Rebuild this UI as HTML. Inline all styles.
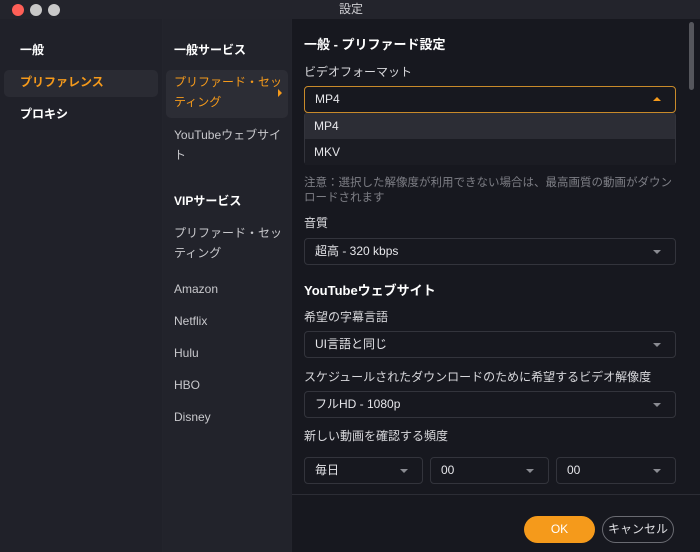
<!DOCTYPE html>
<html><head><meta charset="utf-8"><style>
*{margin:0;padding:0;box-sizing:border-box}
body{width:700px;height:552px;overflow:hidden;background:#23242c;font-family:"Liberation Sans","Noto Sans CJK JP",sans-serif;color:#e6e6ea;position:relative}
.a{position:absolute;white-space:nowrap;line-height:1.2}
.dot{position:absolute;top:4px;width:12px;height:12px;border-radius:50%}
.c1{left:0;top:19px;width:162px;height:533px;background:#202129}
.c2{left:163px;top:19px;width:128px;height:533px;background:#22232b}
.main{left:292px;top:19px;width:408px;height:533px;background:#17181f}
.sel{position:absolute;border:1px solid #33343c;border-radius:4px;background:#17181f;height:27px}
.sel span{position:absolute;left:10px;top:0;line-height:25px;font-size:12px;color:#e6e6ea}
.car{position:absolute;right:14px;top:11px;width:0;height:0;border-left:4px solid transparent;border-right:4px solid transparent;border-top:4px solid #8a8b92}
.lbl{font-size:12px;color:#d8d8dc}
.h{font-size:13px;font-weight:bold;color:#fff}
.s2{font-size:12px;color:#c8c8cc}
</style></head><body>
<div class="dot" style="left:12px;background:#fe5f57"></div>
<div class="dot" style="left:30px;background:#c8c8c8"></div>
<div class="dot" style="left:48px;background:#c8c8c8"></div>
<div class="a" style="left:339px;top:2px;font-size:12px;color:#d0d0d4">設定</div>
<div class="a c1"></div><div class="a c2"></div><div class="a main"></div>
<div class="a h" style="left:20px;top:43px;font-size:12px">一般</div>
<div class="a" style="left:4px;top:70px;width:154px;height:27px;background:#2a2b33;border-radius:5px"></div>
<div class="a h" style="left:20px;top:75px;font-size:12px;color:#f59a1b">プリファレンス</div>
<div class="a h" style="left:20px;top:107px;font-size:12px">プロキシ</div>
<div class="a h" style="left:174px;top:43px;font-size:12px">一般サービス</div>
<div class="a" style="left:166px;top:70px;width:122px;height:48px;background:#2c2d35;border-radius:5px"></div>
<div class="a" style="left:174px;top:72px;font-size:12px;line-height:20px;color:#f59a1b">プリファード・セッ<br>ティング</div>
<div class="a" style="left:278px;top:89px;width:0;height:0;border-top:4px solid transparent;border-bottom:4px solid transparent;border-left:4px solid #f59a1b"></div>
<div class="a s2" style="left:174px;top:125px;line-height:20px">YouTubeウェブサイ<br>ト</div>
<div class="a h" style="left:174px;top:194px;font-size:12px">VIPサービス</div>
<div class="a s2" style="left:174px;top:223px;line-height:20px">プリファード・セッ<br>ティング</div>
<div class="a s2" style="left:174px;top:282px">Amazon</div>
<div class="a s2" style="left:174px;top:314px">Netflix</div>
<div class="a s2" style="left:174px;top:346px">Hulu</div>
<div class="a s2" style="left:174px;top:378px">HBO</div>
<div class="a s2" style="left:174px;top:410px">Disney</div>
<div class="a" style="left:689px;top:22px;width:5px;height:68px;background:#55565c;border-radius:3px"></div>
<div class="a h" style="left:304px;top:37px">一般 - プリファード設定</div>
<div class="a lbl" style="left:304px;top:65px">ビデオフォーマット</div>
<div class="sel" style="left:304px;top:112px;width:372px;height:53px;border-color:#33343c"></div>
<div class="sel" style="left:304px;top:86px;width:372px;border-color:#c88a2a"><span>MP4</span><div style="position:absolute;right:14px;top:10px;border-left:4px solid transparent;border-right:4px solid transparent;border-bottom:4px solid #f59a1b"></div></div>
<div class="a" style="left:305px;top:113px;width:370px;height:26px;background:#2c2d35"></div>
<div class="a" style="left:305px;top:139px;width:370px;height:26px;background:#1b1c23"></div>
<div class="a" style="left:314px;top:119px;font-size:12px">MP4</div>
<div class="a" style="left:314px;top:145px;font-size:12px">MKV</div>
<div class="a" style="left:304px;top:176px;font-size:11.5px;line-height:15px;color:#7d7e85">注意：選択した解像度が利用できない場合は、最高画質の動画がダウン<br>ロードされます</div>
<div class="a lbl" style="left:304px;top:216px">音質</div>
<div class="sel" style="left:304px;top:238px;width:372px"><span>超高 - 320 kbps</span><div class="car"></div></div>
<div class="a h" style="left:304px;top:283px">YouTubeウェブサイト</div>
<div class="a lbl" style="left:304px;top:310px">希望の字幕言語</div>
<div class="sel" style="left:304px;top:331px;width:372px"><span>UI言語と同じ</span><div class="car"></div></div>
<div class="a lbl" style="left:304px;top:370px">スケジュールされたダウンロードのために希望するビデオ解像度</div>
<div class="sel" style="left:304px;top:391px;width:372px"><span>フルHD - 1080p</span><div class="car"></div></div>
<div class="a lbl" style="left:304px;top:429px">新しい動画を確認する頻度</div>
<div class="sel" style="left:304px;top:457px;width:119px"><span>毎日</span><div class="car"></div></div>
<div class="sel" style="left:430px;top:457px;width:119px"><span>00</span><div class="car"></div></div>
<div class="sel" style="left:556px;top:457px;width:120px"><span>00</span><div class="car"></div></div>
<div class="a" style="left:292px;top:494px;width:408px;height:1px;background:#2c2d35"></div>
<div class="a" style="left:524px;top:516px;width:71px;height:27px;background:#f59a1b;border-radius:14px;color:#fff;font-size:12px;text-align:center;line-height:27px">OK</div>
<div class="a" style="left:602px;top:516px;width:72px;height:27px;border:1px solid #6a6b72;border-radius:14px;color:#e0e0e4;font-size:12px;text-align:center;line-height:25px">キャンセル</div>
</body></html>
